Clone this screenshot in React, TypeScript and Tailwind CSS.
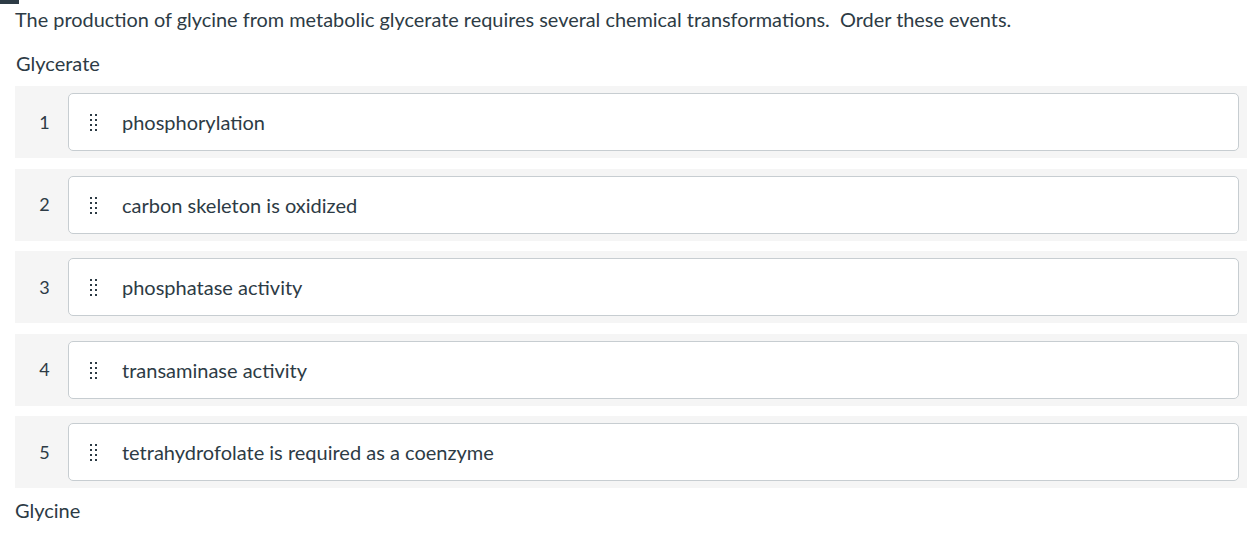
import React from "react";

const items = [
  "phosphorylation",
  "carbon skeleton is oxidized",
  "phosphatase activity",
  "transaminase activity",
  "tetrahydrofolate is required as a coenzyme",
];

function Grip() {
  return (
    <svg width="9" height="18" viewBox="0 0 9 18" className="shrink-0">
      {[0, 1, 2, 3].map((r) =>
        [0, 1].map((c) => (
          <rect key={`${r}-${c}`} x={1 + c * 5} y={1 + r * 5} width="2" height="2" fill="#2d3b45" />
        ))
      )}
    </svg>
  );
}

export default function App() {
  return (
    <div className="relative bg-white w-[1257px] h-[539px] text-[#2d3b45]" style={{ fontFamily: "Lato, 'Noto Sans', sans-serif" }}>
      <div className="absolute left-0 top-0 w-[19px] h-[4px] bg-[#2d3b45]" />
      <div className="pl-[15px] pr-[10px] pt-[7px]">
        <p className="text-[19.9px] leading-[24px]">
          The production of glycine from metabolic glycerate requires several chemical transformations.&nbsp; Order these events.
        </p>
        <p className="text-[20px] leading-[24px] mt-[20px] pl-[1px]">Glycerate</p>
        <div className="mt-[11px] flex flex-col gap-[10.5px]">
          {items.map((t, i) => (
            <div key={i} className="bg-[#f5f5f5] h-[72px] flex items-center pr-[8px]">
              <div className="w-[53px] text-center pl-[6px] text-[18px]">{i + 1}</div>
              <div className="flex-1 h-[58px] bg-white border border-[#c7cdd1] rounded-[5px] flex items-center pl-[20px]">
                <Grip />
                <span className="ml-[24px] text-[20px]">{t}</span>
              </div>
            </div>
          ))}
        </div>
        <p className="text-[20px] leading-[24px] mt-[10px]">Glycine</p>
      </div>
    </div>
  );
}
